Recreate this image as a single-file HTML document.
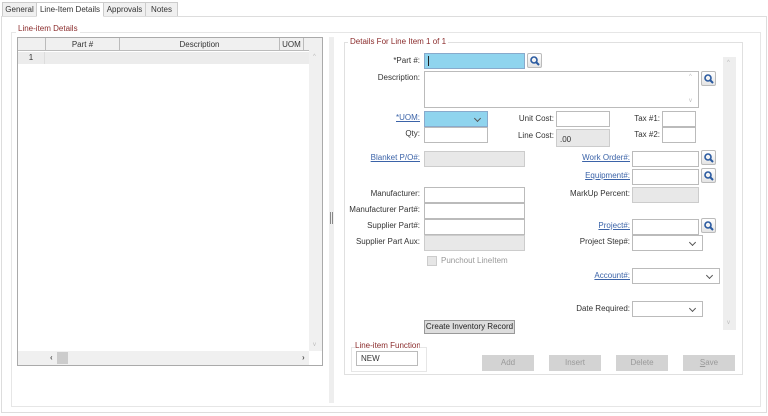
<!DOCTYPE html><html><head><style>
*{box-sizing:border-box;margin:0;padding:0}
body{width:768px;height:416px;background:#fff;font-family:"Liberation Sans",sans-serif;font-size:8px;color:#333;position:relative;overflow:hidden}
div,span{position:absolute}
.tab{top:2px;height:15px;border:1px solid #ccc;background:#f0f0f0;line-height:13px;text-align:center;font-size:8px}
.lb{text-align:right;line-height:15px;white-space:nowrap}
.lk{color:#3b63a8;text-decoration:underline}
.in{border:1px solid #bbb;background:#fff;height:16px}
.gr{background:#e8e8e8;border:1px solid #ccc}
.bl{background:#8fd4ee;border:1px solid #8ac}
.sb{width:15px;height:15px;border:1px solid #bbb;border-radius:2px;background:linear-gradient(#fff,#e4e4e4)}
.sb svg{position:absolute;left:2px;top:2px}
.sel::after{content:"";position:absolute;right:7px;top:4px;width:4px;height:4px;border-right:1.3px solid #555;border-bottom:1.3px solid #555;transform:rotate(45deg)}
.btn{background:#d3d3d3;color:#999;text-align:center;line-height:16px;height:16px;width:52px;top:355px}
.ar{font-size:6px;color:#bbb}
</style></head><body>
<div class="tab" style="left:2px;width:35px">General</div>
<div class="tab" style="left:36px;width:68px;background:#fff;border-bottom-color:#fff;z-index:2">Line-Item Details</div>
<div class="tab" style="left:103px;width:43px">Approvals</div>
<div class="tab" style="left:145px;width:33px">Notes</div>
<div style="left:1px;top:16px;width:766px;height:397px;border:1px solid #ddd"></div>
<div style="left:11px;top:32px;width:750px;height:375px;border:1px solid #e6e6e6"></div>
<div style="left:16px;top:24px;background:#fff;padding:0 2px;color:#8b2c2c">Line-item Details</div>
<!-- grid -->
<div style="left:17px;top:37px;width:306px;height:329px;border:1px solid #aaa;background:#fff"></div>
<div style="left:18px;top:38px;width:291px;height:13px;background:#f0f0f0;border-bottom:1px solid #bbb"></div>
<div style="left:45px;top:38px;width:74px;height:13px;border-left:1px solid #bbb;text-align:center;line-height:13px">Part #</div>
<div style="left:119px;top:38px;width:160px;height:13px;border-left:1px solid #bbb;text-align:center;line-height:13px">Description</div>
<div style="left:279px;top:38px;width:25px;height:13px;border-left:1px solid #bbb;border-right:1px solid #bbb;text-align:center;line-height:13px">UOM</div>
<div style="left:18px;top:52px;width:291px;height:12px;background:#ececec"></div>
<div style="left:18px;top:52px;width:27px;height:12px;line-height:12px;text-align:center;border-right:1px solid #ddd">1</div>
<div style="left:309px;top:38px;width:13px;height:313px;background:#f0f0f0"></div>
<div class="ar" style="left:313px;top:54px">^</div>
<div class="ar" style="left:313px;top:342px">v</div>
<div style="left:18px;top:351px;width:291px;height:14px;background:#f0f0f0"></div>
<div style="left:50px;top:353px;font-weight:bold;color:#555">&lsaquo;</div>
<div style="left:57px;top:352px;width:11px;height:12px;background:#ccc"></div>
<div style="left:302px;top:353px;font-weight:bold;color:#555">&rsaquo;</div>
<!-- splitter -->
<div style="left:329px;top:37px;width:5px;height:366px;background:#eee"></div>
<div style="left:330px;top:212px;width:1px;height:12px;background:#888"></div>
<div style="left:332px;top:212px;width:1px;height:12px;background:#888"></div>
<!-- right fieldset -->
<div style="left:344px;top:42px;width:399px;height:333px;border:1px solid #e0e0e0"></div>
<div style="left:348px;top:37px;background:#fff;padding:0 2px;color:#8b2c2c">Details For Line Item 1 of 1</div>
<div style="left:723px;top:57px;width:13px;height:273px;background:#eee"></div>
<div class="ar" style="left:727px;top:60px">^</div>
<div class="ar" style="left:727px;top:320px">v</div>

<div class="lb" style="left:340px;width:80px;top:53px">*Part #:</div>
<div class="in bl" style="left:424px;top:53px;width:101px"></div>
<div style="left:428px;top:56px;width:1px;height:10px;background:#222"></div>
<div class="sb" style="left:527px;top:53px"><svg width="10" height="10"><circle cx="4" cy="4" r="3" fill="none" stroke="#2a5aa0" stroke-width="1.6"/><path d="M6 6L9 9" stroke="#2a5aa0" stroke-width="2"/></svg></div>
<div class="lb" style="left:340px;width:80px;top:70px">Description:</div>
<div class="in" style="left:424px;top:71px;width:275px;height:37px"></div>
<div class="ar" style="left:689px;top:74px">^</div>
<div class="ar" style="left:689px;top:98px">v</div>
<div class="sb" style="left:701px;top:71px"><svg width="10" height="10"><circle cx="4" cy="4" r="3" fill="none" stroke="#2a5aa0" stroke-width="1.6"/><path d="M6 6L9 9" stroke="#2a5aa0" stroke-width="2"/></svg></div>
<div class="lb lk" style="left:340px;width:80px;top:110px">*UOM:</div>
<div class="in bl sel" style="left:424px;top:111px;width:64px"></div>
<div class="lb" style="left:480px;width:74px;top:111px">Unit Cost:</div>
<div class="in" style="left:556px;top:111px;width:54px"></div>
<div class="lb" style="left:600px;width:60px;top:111px">Tax #1:</div>
<div class="in" style="left:662px;top:111px;width:34px"></div>
<div class="lb" style="left:340px;width:80px;top:126px">Qty:</div>
<div class="in" style="left:424px;top:127px;width:64px"></div>
<div class="lb" style="left:480px;width:74px;top:128px">Line Cost:</div>
<div class="in gr" style="left:556px;top:129px;width:54px;height:18px;padding:5px 0 0 3px">.00</div>
<div class="lb" style="left:600px;width:60px;top:127px">Tax #2:</div>
<div class="in" style="left:662px;top:127px;width:34px"></div>

<div class="lb lk" style="left:340px;width:80px;top:150px">Blanket P/O#:</div>
<div class="in gr" style="left:424px;top:151px;width:101px"></div>
<div class="lb lk" style="left:560px;width:70px;top:150px">Work Order#:</div>
<div class="in" style="left:632px;top:151px;width:67px"></div>
<div class="sb" style="left:701px;top:150px"><svg width="10" height="10"><circle cx="4" cy="4" r="3" fill="none" stroke="#2a5aa0" stroke-width="1.6"/><path d="M6 6L9 9" stroke="#2a5aa0" stroke-width="2"/></svg></div>
<div class="lb lk" style="left:560px;width:70px;top:168px">Equipment#:</div>
<div class="in" style="left:632px;top:169px;width:67px"></div>
<div class="sb" style="left:701px;top:168px"><svg width="10" height="10"><circle cx="4" cy="4" r="3" fill="none" stroke="#2a5aa0" stroke-width="1.6"/><path d="M6 6L9 9" stroke="#2a5aa0" stroke-width="2"/></svg></div>
<div class="lb" style="left:340px;width:80px;top:186px">Manufacturer:</div>
<div class="in" style="left:424px;top:187px;width:101px"></div>
<div class="lb" style="left:540px;width:90px;top:186px">MarkUp Percent:</div>
<div class="in gr" style="left:632px;top:187px;width:67px"></div>
<div class="lb" style="left:330px;width:90px;top:202px">Manufacturer Part#:</div>
<div class="in" style="left:424px;top:203px;width:101px"></div>
<div class="lb" style="left:340px;width:80px;top:218px">Supplier Part#:</div>
<div class="in" style="left:424px;top:219px;width:101px"></div>
<div class="lb lk" style="left:560px;width:70px;top:218px">Project#:</div>
<div class="in" style="left:632px;top:219px;width:67px"></div>
<div class="sb" style="left:701px;top:218px"><svg width="10" height="10"><circle cx="4" cy="4" r="3" fill="none" stroke="#2a5aa0" stroke-width="1.6"/><path d="M6 6L9 9" stroke="#2a5aa0" stroke-width="2"/></svg></div>
<div class="lb" style="left:340px;width:80px;top:234px">Supplier Part Aux:</div>
<div class="in gr" style="left:424px;top:235px;width:101px"></div>
<div class="lb" style="left:560px;width:70px;top:234px">Project Step#:</div>
<div class="in sel" style="left:632px;top:235px;width:71px"></div>
<div style="left:427px;top:256px;width:10px;height:10px;background:#e6e6e6;border:1px solid #ccc"></div>
<div style="left:441px;top:256px;color:#999">Punchout LineItem</div>
<div class="lb lk" style="left:560px;width:70px;top:268px">Account#:</div>
<div class="in sel" style="left:632px;top:268px;width:88px"></div>
<div class="lb" style="left:550px;width:80px;top:301px">Date Required:</div>
<div class="in sel" style="left:632px;top:301px;width:71px"></div>
<div style="left:424px;top:320px;width:91px;height:14px;background:#ddd;border:1px solid #999;text-align:center;line-height:12px;color:#222">Create Inventory Record</div>
<div style="left:351px;top:347px;width:76px;height:25px;border:1px solid #e6e6e6"></div>
<div style="left:355px;top:341px;background:#fff;color:#8b2c2c;width:65px;overflow:hidden;white-space:nowrap">Line-item Function</div>
<div class="in" style="left:356px;top:351px;width:62px;height:15px;padding:2px 0 0 4px;line-height:10px">NEW</div>
<div class="btn" style="left:482px">Add</div>
<div class="btn" style="left:549px">Insert</div>
<div class="btn" style="left:616px">Delete</div>
<div class="btn" style="left:683px"><u>S</u>ave</div>
</body></html>
